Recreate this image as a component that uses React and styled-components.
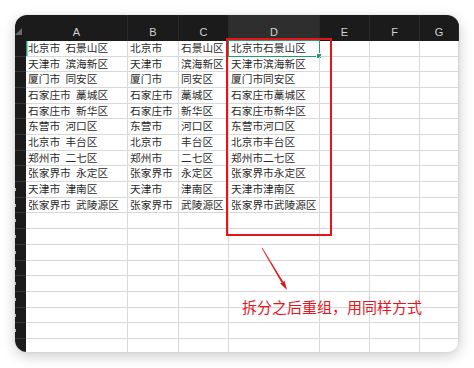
import React from 'react';
import styled, { createGlobalStyle } from 'styled-components';

const GlobalStyle = createGlobalStyle`
  html, body {
    margin: 0;
    padding: 0;
    background: #ffffff;
  }
  body {
    width: 474px;
    height: 368px;
    overflow: hidden;
    font-family: "Noto Sans CJK SC", "Noto Sans", sans-serif;
  }
`;

const Page = styled.div`
  padding: 15px 15px 0 15px;
`;

const Card = styled.div`
  position: relative;
  width: 444px;
  height: 337px;
  border-radius: 12px;
  overflow: hidden;
  background: #fff;
  box-shadow: 0 4px 14px rgba(0, 0, 0, 0.2), 0 0 3px rgba(0, 0, 0, 0.08);
`;

const Sheet = styled.div`
  display: grid;
  grid-template-columns: 11px 102px 51px 50px 91px 50px 50px 39px;
  grid-template-rows: 26px ${p => p.$rows};
`;

const Corner = styled.div`
  background: #1b1b1b;
  display: flex;
  align-items: flex-end;
  padding-bottom: 6px;
  box-sizing: border-box;
`;

const Triangle = styled.div`
  width: 0;
  height: 0;
  border-left: 7px solid transparent;
  border-bottom: 7px solid #6a6a6a;
`;

const ColHead = styled.div`
  background: ${p => (p.$active ? '#2e2e2e' : '#1b1b1b')};
  border-right: 1px solid #2a2a2a;
  color: #d2d2d2;
  font-family: "Liberation Sans", Arial, sans-serif;
  font-size: 11px;
  display: flex;
  align-items: center;
  justify-content: center;
  padding-top: 8px;
  box-sizing: border-box;
`;

const RowHead = styled.div`
  background: #1b1b1b;
  border-bottom: 1px solid #363636;
  box-sizing: border-box;
  display: flex;
  align-items: center;
`;

// right edge of the clipped row numbers
const Speck = styled.div`
  width: 1px;
  height: 3px;
  background: ${p => (p.$show ? '#b8b8b8' : 'transparent')};
`;

const Cell = styled.div`
  position: relative;
  border-right: 1px solid #d8d8d8;
  border-bottom: 1px solid #d8d8d8;
  box-sizing: border-box;
  padding-left: 2px;
  display: flex;
  align-items: center;
  font-size: 10.7px;
  line-height: 1;
  color: #2a2a2a;
  white-space: pre;
  box-shadow: ${p => (p.$mark ? 'inset 1.5px 0 0 #23a36c' : 'none')};

  ${p =>
    p.$selected &&
    `
    &::before {
      content: '';
      position: absolute;
      left: -1px;
      top: -1px;
      right: -1px;
      bottom: -1px;
      border: 1.5px solid #1f9e68;
    }
    &::after {
      content: '';
      position: absolute;
      right: -3px;
      bottom: -3px;
      width: 4px;
      height: 4px;
      background: #1f9e68;
      border: 1px solid #fff;
    }
  `}
`;

const RedBox = styled.div`
  position: absolute;
  left: 211px;
  top: 23px;
  width: 106px;
  height: 198px;
  border: 2px solid #e3141c;
  box-sizing: border-box;
`;

const Arrow = styled.svg`
  position: absolute;
  left: 240px;
  top: 228px;
  overflow: visible;
`;

const Note = styled.div`
  position: absolute;
  left: 227px;
  top: 284px;
  font-size: 15px;
  line-height: 1;
  color: #e5151d;
  white-space: nowrap;
`;

const data = [
  ['北京市', '石景山区'],
  ['天津市', '滨海新区'],
  ['厦门市', '同安区'],
  ['石家庄市', '藁城区'],
  ['石家庄市', '新华区'],
  ['东营市', '河口区'],
  ['北京市', '丰台区'],
  ['郑州市', '二七区'],
  ['张家界市', '永定区'],
  ['天津市', '津南区'],
  ['张家界市', '武陵源区'],
];

const columns = ['A', 'B', 'C', 'D', 'E', 'F', 'G'];
const ROW_COUNT = 20;
const STEP = 15.68;

const rowHeights = Array.from({ length: ROW_COUNT }, (_, i) =>
  Math.round((i + 1) * STEP) - Math.round(i * STEP)
);

const App = () => {
  const rows = Array.from({ length: ROW_COUNT }, (_, i) => data[i] || null);

  return (
    <>
      <GlobalStyle />
      <Page>
        <Card>
          <Sheet $rows={rowHeights.map(h => h + 'px').join(' ')}>
            <Corner>
              <Triangle />
            </Corner>
            {columns.map(c => (
              <ColHead key={c} $active={c === 'D'}>{c}</ColHead>
            ))}
            {rows.map((row, i) => (
              <React.Fragment key={i}>
                <RowHead>
                  <Speck $show={i + 1 >= 10} />
                </RowHead>
                <Cell $mark={i === 0}>{row ? row[0] + '\u2002' + row[1] : ''}</Cell>
                <Cell>{row ? row[0] : ''}</Cell>
                <Cell>{row ? row[1] : ''}</Cell>
                <Cell $selected={i === 0}>{row ? row[0] + row[1] : ''}</Cell>
                <Cell />
                <Cell />
                <Cell />
              </React.Fragment>
            ))}
          </Sheet>
          <RedBox />
          <Arrow width="40" height="52" viewBox="0 0 40 52">
            <polygon points="6.7,5.2 7.3,4.8 28.2,38.7 26.6,39.8" fill="#e3141c" />
            <polygon points="32,47 25.2,40.6 29.6,38" fill="#e3141c" />
          </Arrow>
          <Note>拆分之后重组，用同样方式</Note>
        </Card>
      </Page>
    </>
  );
};

export default App;
